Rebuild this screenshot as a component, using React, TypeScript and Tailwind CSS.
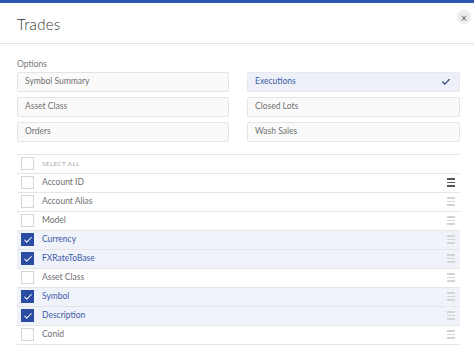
import { Check } from "lucide-react";

const options = [
    { label: "Symbol Summary", active: false },
    { label: "Executions", active: true },
    { label: "Asset Class", active: false },
    { label: "Closed Lots", active: false },
    { label: "Orders", active: false },
    { label: "Wash Sales", active: false },
];

const fields = [
    { label: "Account ID", checked: false, dark: true },
    { label: "Account Alias", checked: false },
    { label: "Model", checked: false },
    { label: "Currency", checked: true },
    { label: "FXRateToBase", checked: true },
    { label: "Asset Class", checked: false },
    { label: "Symbol", checked: true },
    { label: "Description", checked: true },
    { label: "Conid", checked: false },
];

function Handle({ dark }: { dark?: boolean }) {
    const color = dark ? "bg-[#555]" : "bg-[#d4d4d4]";
    return (
        <div className="flex flex-col gap-[2px] w-[8px]">
            <div className={`h-[1.5px] ${color}`}></div>
            <div className={`h-[1.5px] ${color}`}></div>
            <div className={`h-[1.5px] ${color}`}></div>
        </div>
    );
}

function Box({ checked }: { checked: boolean }) {
    if (checked) {
        return (
            <div className="w-[13px] h-[13px] bg-[#2a4ca3] flex items-center justify-center">
                <Check size={10} strokeWidth={2.5} className="text-white" />
            </div>
        );
    }
    return <div className="w-[13px] h-[13px] border border-[#d6d6d6] bg-white"></div>;
}

export default function App() {
    return (
        <div className="w-[474px] h-[346px] bg-white overflow-hidden font-['Lato',sans-serif]">
            <div className="h-[3px] bg-[#2f58b5]"></div>

            <div className="h-[41px] border-b border-[#e3e3e3] flex items-start justify-between pl-[17px] pr-[3px]">
                <h1 className="text-[15px] font-light text-[#333] tracking-[0.3px] mt-[10px]">Trades</h1>
                <div className="w-[14px] h-[14px] rounded-full bg-[#ededed] flex items-center justify-center text-[#666] text-[11px] leading-none mt-[7px]">
                    ×
                </div>
            </div>

            <div className="px-[17px] pt-[16px]">
                <div className="text-[8.5px] text-[#777] leading-none mb-[3px]">Options</div>
                <div className="grid grid-cols-[212px_213px] gap-x-[18px] gap-y-[5px]">
                    {options.map((o) => (
                        <div
                            key={o.label}
                            className={`h-[20px] rounded-[2px] border flex items-center justify-between pl-[7px] pr-[8px] text-[8.5px] ${
                                o.active
                                    ? "bg-[#eef0f8] border-[#e6e8f0] text-[#3c5aa6]"
                                    : "bg-[#fafafa] border-[#e4e4e4] text-[#707070]"
                            }`}
                        >
                            <span>{o.label}</span>
                            {o.active && <Check size={10} strokeWidth={3} className="text-[#34497e]" />}
                        </div>
                    ))}
                </div>

                <div className="mt-[12px] w-[443px] border-t border-[#e6e6e6]">
                    <div className="h-[19px] flex items-center border-b border-[#e6e6e6] pl-[4px]">
                        <Box checked={false} />
                        <span className="ml-[8px] text-[6.5px] tracking-[0.3px] text-[#aaa] uppercase">Select All</span>
                    </div>
                    {fields.map((f) => (
                        <div
                            key={f.label}
                            className={`h-[19px] flex items-center border-b border-[#e6e6e6] pl-[4px] pr-[5px] ${
                                f.checked ? "bg-[#f1f3fa]" : "bg-white"
                            }`}
                        >
                            <Box checked={f.checked} />
                            <span className={`ml-[8px] flex-1 text-[8.5px] ${f.checked ? "text-[#3c5aa6]" : "text-[#707070]"}`}>
                                {f.label}
                            </span>
                            <Handle dark={f.dark} />
                        </div>
                    ))}
                </div>
            </div>
        </div>
    );
}
